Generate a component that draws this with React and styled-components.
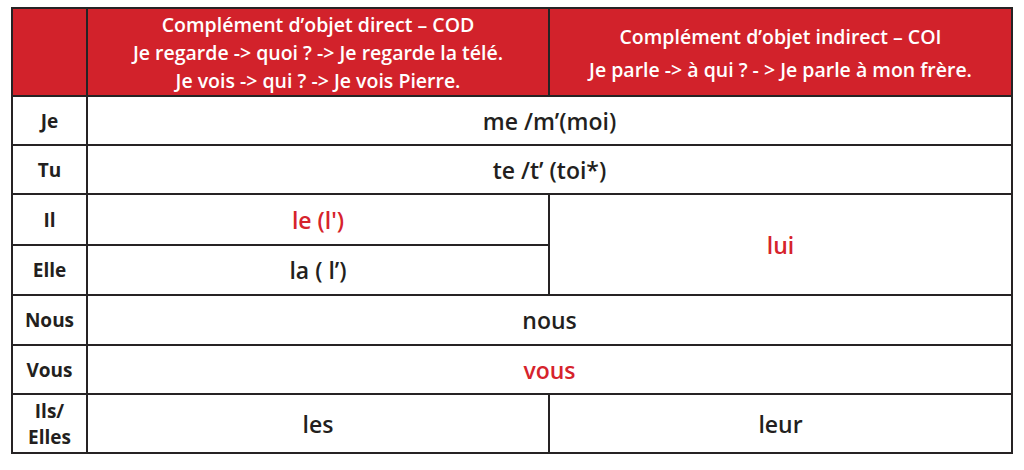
import React from "react";
import styled, { createGlobalStyle } from "styled-components";

const Global = createGlobalStyle`
  html, body { margin: 0; padding: 0; background: #ffffff; }
  body { font-family: "Open Sans", "Noto Sans", sans-serif; }
`;

const Page = styled.div`
  padding: 7px 0 0 11px;
`;

const Table = styled.table`
  border-collapse: collapse;
  table-layout: fixed;
  width: 1000px;
  border: 2px solid #262324;
`;

const Col = styled.col`
  width: ${(p) => p.$w}px;
`;

const HeadRow = styled.tr`
  height: 88px;
  background: #d2222b;
`;

const Row = styled.tr`
  height: ${(p) => p.$h}px;
`;

const HeadCell = styled.th`
  border: 2px solid #262324;
  padding: 2px 0 0;
  color: #ffffff;
  font-family: "Open Sans", "Noto Sans", sans-serif;
  font-weight: 600;
  font-size: 19.5px;
  line-height: ${(p) => p.$lh || 28}px;
  text-align: center;
  vertical-align: middle;
`;

const Label = styled.td`
  border: 2px solid #262324;
  padding: 0;
  color: #231f20;
  font-family: "Open Sans", "Noto Sans", sans-serif;
  font-weight: 700;
  font-stretch: 90%;
  font-size: 19px;
  line-height: 26px;
  text-align: center;
  vertical-align: middle;
`;

const Value = styled.td`
  border: 2px solid #262324;
  padding: 0;
  color: ${(p) => (p.$red ? "#d6232c" : "#231f20")};
  font-family: "Open Sans", "Noto Sans", sans-serif;
  font-weight: 600;
  font-size: 23px;
  text-align: center;
  vertical-align: middle;
`;

const Line = styled.div`
  display: block;
`;

export default function App() {
  return (
    <>
      <Global />
      <Page>
        <Table>
          <colgroup>
            <Col $w={75} />
            <Col $w={462} />
            <Col $w={463} />
          </colgroup>
          <thead>
            <HeadRow>
              <HeadCell />
              <HeadCell>
                <Line>Complément d’objet direct – COD</Line>
                <Line>Je regarde -&gt; quoi ? -&gt; Je regarde la télé.</Line>
                <Line>Je vois -&gt; qui ? -&gt; Je vois Pierre.</Line>
              </HeadCell>
              <HeadCell $lh={33}>
                <Line>Complément d’objet indirect – COI</Line>
                <Line>Je parle -&gt; à qui ? - &gt; Je parle à mon frère.</Line>
              </HeadCell>
            </HeadRow>
          </thead>
          <tbody>
            <Row $h={49}>
              <Label>Je</Label>
              <Value colSpan={2}>me /m’(moi)</Value>
            </Row>
            <Row $h={49}>
              <Label>Tu</Label>
              <Value colSpan={2}>te /t’ (toi*)</Value>
            </Row>
            <Row $h={51}>
              <Label>Il</Label>
              <Value $red>le (l')</Value>
              <Value $red rowSpan={2}>lui</Value>
            </Row>
            <Row $h={50}>
              <Label>Elle</Label>
              <Value>la ( l’)</Value>
            </Row>
            <Row $h={50}>
              <Label>Nous</Label>
              <Value colSpan={2}>nous</Value>
            </Row>
            <Row $h={49}>
              <Label>Vous</Label>
              <Value $red colSpan={2}>vous</Value>
            </Row>
            <Row $h={59}>
              <Label>
                <Line>Ils/</Line>
                <Line>Elles</Line>
              </Label>
              <Value>les</Value>
              <Value>leur</Value>
            </Row>
          </tbody>
        </Table>
      </Page>
    </>
  );
}
